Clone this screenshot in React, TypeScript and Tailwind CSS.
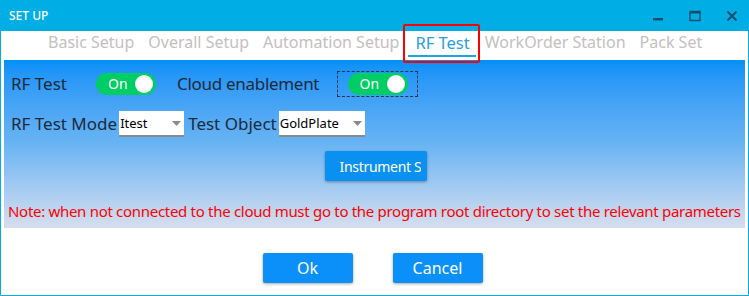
import React from "react";

const font = { fontFamily: '"Noto Sans", "Open Sans", sans-serif' };

function Toggle() {
  return (
    <div className="flex h-[22px] w-[60px] items-center justify-between rounded-full bg-[#00cd64] pl-[12px] pr-[3px]">
      <span className="text-[14px] leading-none text-white">On</span>
      <span className="h-[18px] w-[18px] rounded-full bg-white" />
    </div>
  );
}

function Select({ value, width }: { value: string; width: string }) {
  return (
    <div className={`flex h-[26px] ${width} items-center justify-between border-b-2 border-[#8a8a8a] bg-white pl-[1px] pr-[3px]`}>
      <span className="text-[13px] leading-none text-black">{value}</span>
      <svg width="9" height="5" viewBox="0 0 9 5"><path d="M0 0h9L4.5 5z" fill="#8a8a8a" /></svg>
    </div>
  );
}

export default function App() {
  return (
    <div className="relative flex h-[296px] w-[749px] flex-col border-x border-b border-[#00aee6] bg-white" style={font}>
      {/* title bar */}
      <div className="flex h-[31px] items-center justify-between bg-[#00aee6] pl-[8px] pr-[10px]">
        <span className="text-[12px] font-medium text-white">SET UP</span>
        <div className="flex items-center gap-[25px]">
          <svg width="12" height="12" viewBox="0 0 12 12"><rect x="1" y="8" width="10" height="2.5" fill="#12506e" /></svg>
          <svg width="12" height="12" viewBox="0 0 12 12"><rect x="1" y="1.5" width="10" height="9" fill="none" stroke="#12506e" strokeWidth="1.5" /><rect x="1" y="1" width="10" height="2.5" fill="#12506e" /></svg>
          <svg width="12" height="12" viewBox="0 0 12 12"><path d="M1.5 1.5l9 9M10.5 1.5l-9 9" stroke="#12506e" strokeWidth="2" /></svg>
        </div>
      </div>
      {/* tabs */}
      <div className="flex h-[29px] items-start gap-[14px] pl-[47px] text-[16px] leading-[23px] text-[#c4c0c0]">
        <span>Basic Setup</span>
        <span>Overall Setup</span>
        <span>Automation Setup</span>
        <span className="relative ml-[1px] px-[1px] text-[16.5px] text-[#2a9fe0]">
          RF Test
          <span className="absolute -left-[6px] -right-[5px] top-[24px] h-[2px] bg-[#1ea5e0]" />
        </span>
        <span>WorkOrder Station</span>
        <span>Pack Set</span>
      </div>
      {/* panel */}
      <div className="mx-[3px] flex h-[168px] flex-col bg-gradient-to-b from-[#0090f8] via-[#68b4f3] to-[#d6deee] pt-[11px] text-[#1c2a3a]">
        <div className="flex h-[26px] items-center pl-[7px]">
          <span className="w-[85px] text-[17px]">RF Test</span>
          <Toggle />
          <span className="ml-[21px] w-[160px] text-[17px] tracking-[-0.3px]">Cloud enablement</span>
          <div className="flex h-[26px] w-[81px] items-center justify-center border border-dashed border-[#1c3450]">
            <Toggle />
          </div>
        </div>
        <div className="mt-[14px] flex h-[26px] items-center pl-[7px]">
          <span className="mr-[2px] text-[17px]">RF Test Mode</span>
          <Select value="Itest" width="w-[65px]" />
          <span className="ml-[4px] mr-[2px] text-[17px]">Test Object</span>
          <Select value="GoldPlate" width="w-[86px]" />
        </div>
        <div className="mt-[14px] flex justify-center pl-[2px]">
          <div className="flex h-[30px] w-[102px] items-center rounded-[2px] bg-[#0a90f0] pl-[15px] pr-[6px] shadow-[0_1px_3px_rgba(0,0,0,0.35)]">
            <div className="overflow-hidden">
              <span className="whitespace-nowrap text-[14px] tracking-[-0.3px] text-white">Instrument S</span>
            </div>
          </div>
        </div>
        <div className="mt-[20px] pl-[4px] text-[15px] leading-[20px] tracking-[-0.3px] text-[#ff0000] whitespace-nowrap">
          Note: when not connected to the cloud must go to the program root directory to set the relevant parameters
        </div>
      </div>
      {/* buttons */}
      <div className="mt-[25px] flex justify-center gap-[40px] pr-[4px]">
        <div className="flex h-[30px] w-[90px] items-center justify-center rounded-[2px] bg-[#0a90f8] text-[16px] text-white shadow-[0_1px_3px_rgba(0,0,0,0.35)]">Ok</div>
        <div className="flex h-[30px] w-[90px] items-center justify-center rounded-[2px] bg-[#0a90f8] text-[16px] text-white shadow-[0_1px_3px_rgba(0,0,0,0.35)]">Cancel</div>
      </div>
      {/* annotation */}
      <div className="pointer-events-none absolute left-[402px] top-[24px] h-[39px] w-[77px] rounded-[2px] border-2 border-[#ff0000]" />
    </div>
  );
}
